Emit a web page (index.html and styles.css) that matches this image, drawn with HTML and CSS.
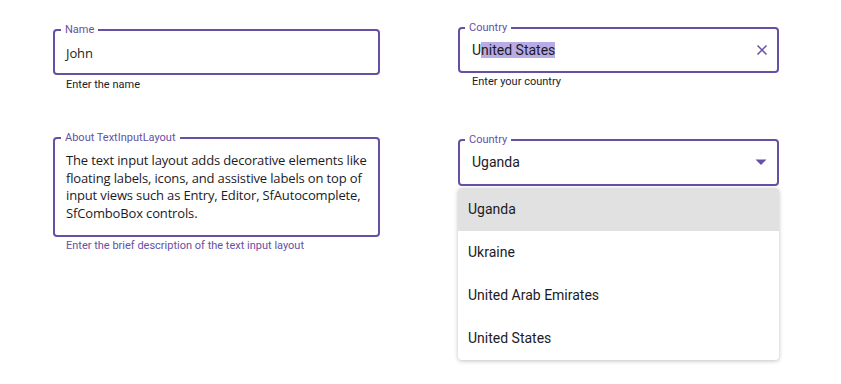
FILE: index.html
```html
<!DOCTYPE html>
<html lang="en">
<head>
  <meta charset="UTF-8">
  <meta name="viewport" content="width=device-width, initial-scale=1.0">
  <title>TextInputLayout</title>
  <link rel="stylesheet" href="styles.css">
</head>
<body>

  <div class="page">
    <div class="col col-left">
      <div class="group">
        <fieldset class="field">
          <legend>Name</legend>
          <div class="value value-name">John</div>
        </fieldset>
        <p class="helper">Enter the name</p>
      </div>

      <div class="group group-about">
        <fieldset class="field">
          <legend>About TextInputLayout</legend>
          <div class="value value-about">The text input layout adds decorative elements like floating labels, icons, and assistive labels on top of input views such as Entry, Editor, SfAutocomplete, SfComboBox controls.</div>
        </fieldset>
        <p class="helper helper-accent">Enter the brief description of the text input layout</p>
      </div>
    </div>

    <div class="col col-right">
      <div class="group">
        <fieldset class="field field-right">
          <legend>Country</legend>
          <div class="value value-row value-country">
            <span>U<span class="sel">nited States</span></span>
            <svg class="icon" width="12" height="12" viewBox="0 0 12 12">
              <path d="M1.5 1.5 L10.5 10.5 M10.5 1.5 L1.5 10.5" stroke="#6750a4" stroke-width="1.5" fill="none"/>
            </svg>
          </div>
        </fieldset>
        <p class="helper">Enter your country</p>
      </div>

      <div class="group group-combo">
        <div class="combo">
          <fieldset class="field field-right">
            <legend>Country</legend>
            <div class="value value-row value-combo">
              <span>Uganda</span>
              <svg class="icon" width="12" height="7" viewBox="0 0 12 7">
                <path d="M0.5 0.5 L11.5 0.5 L6 6 Z" fill="#6750a4"/>
              </svg>
            </div>
          </fieldset>
          <ul class="dropdown">
            <li class="active">Uganda</li>
            <li>Ukraine</li>
            <li>United Arab Emirates</li>
            <li>United States</li>
          </ul>
        </div>
      </div>
    </div>
  </div>

</body>
</html>
```

FILE: styles.css
```css
body {
  margin: 0;
  padding: 0;
  min-height: 384px;
  background: #ffffff;
  font-family: 'Roboto', 'Liberation Sans', sans-serif;
  color: #1c1b1f;
}
.page {
  display: grid;
  grid-template-columns: 327px 321px;
  column-gap: 78px;
  padding-left: 53px;
  min-height: 384px;
}
.col-left {
  padding-top: 24px;
}
.col-right {
  padding-top: 22px;
}
.field {
  margin: 0;
  padding: 0 11px;
  border: 2px solid #6750a4;
  border-radius: 4px;
  min-width: 0;
}
legend {
  font-size: 11px;
  line-height: 12px;
  color: #6750a4;
  padding: 0 4px;
  margin-left: -5px;
}
.value {
  font-size: 14px;
  line-height: 20px;
}
.value-name {
  font-family: 'Open Sans', 'Noto Sans', sans-serif;
  font-size: 13px;
  letter-spacing: -0.1px;
  padding: 7px 0 10px;
}
.value-about {
  font-family: 'Open Sans', 'Noto Sans', sans-serif;
  font-size: 13px;
  letter-spacing: -0.15px;
  line-height: 17.5px;
  padding: 8px 0 13px;
}
.helper {
  margin: 3px 0 0 13px;
  font-size: 11px;
  line-height: 14px;
  color: #1c1b1f;
}
.helper-accent {
  color: #6750a4;
  margin-top: 2px;
}
.group-about {
  margin-top: 40px;
}
.field-right {
  padding: 0 9px 0 12px;
}
.field-right legend {
  margin-left: -7px;
}
.value-row {
  display: flex;
  align-items: center;
  justify-content: space-between;
}
.value-country {
  padding: 6px 0 11px;
}
.value-combo {
  padding: 6px 1px 12px 0;
}
.sel {
  background: #b9abe4;
}
.icon {
  display: block;
}
.col-right .helper {
  margin: 2px 0 0 14px;
}
.group-combo {
  margin-top: 45px;
}
.combo {
  position: relative;
}
.dropdown {
  position: absolute;
  top: calc(100% + 2px);
  left: 0;
  right: 0;
  margin: 0;
  padding: 0;
  list-style: none;
  background: #ffffff;
  border-radius: 4px;
  box-shadow: 0 1px 4px rgba(0, 0, 0, 0.25);
  overflow: hidden;
}
.dropdown li {
  height: 43px;
  line-height: 43px;
  padding-left: 10px;
  font-size: 14px;
}
.dropdown li.active {
  background: #e1e1e1;
}
```
